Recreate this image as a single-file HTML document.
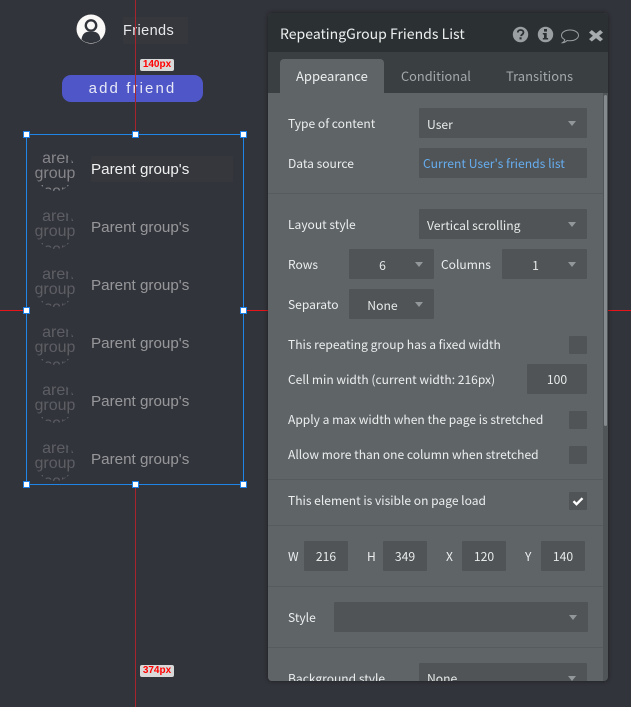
<!DOCTYPE html>
<html>
<head>
<meta charset="utf-8">
<style>
html,body{margin:0;padding:0;width:631px;height:707px;overflow:hidden;background:#32343b}
*{box-sizing:border-box}
.a{position:absolute}
body{font-family:"DejaVu Sans",sans-serif}
.t{position:absolute;white-space:nowrap;font-family:"Noto Sans CJK JP","Liberation Sans",sans-serif;font-size:12.05px;color:#eceeee;line-height:18px;margin-top:1px}
.f{position:absolute;background:#505456;border-radius:1px}
.v{position:absolute;white-space:nowrap;font-family:"Noto Sans CJK JP","Liberation Sans",sans-serif;font-size:12.15px;color:#e8eaea;line-height:30px;top:0;margin-top:1px}
.c{position:absolute;left:0;right:0;text-align:center;font-family:"Noto Sans CJK JP","Liberation Sans",sans-serif;font-size:12.2px;color:#e8eaea;line-height:30px;top:0}
.s{top:1px}
.ar{position:absolute;width:0;height:0;border-left:4.5px solid transparent;border-right:4.5px solid transparent;border-top:5px solid #92979a;top:13px}
.cb{position:absolute;left:569px;width:18px;height:18px;background:#505456;border-radius:1px}
.d{position:absolute;left:268px;width:335px;height:1px;background:#565b5e}
.h{position:absolute;width:7px;height:7px;background:#fff;border:1px solid #1a7fe8}
.rt{position:absolute;left:91px;font-family:"Liberation Sans",sans-serif;font-size:15.2px;line-height:26px;color:#f0f0f0;white-space:nowrap}
.av{position:absolute;left:35px;width:40px;height:40px;border-radius:50%;overflow:hidden;font-family:"Liberation Sans",sans-serif;font-size:16px;line-height:17px;text-align:center;color:#85858a}
.av div{white-space:nowrap;position:absolute;left:-10px;width:60px}
.dim{opacity:.52}
.lb{position:absolute;left:140px;width:34px;height:12px;background:#d9d9d9;border-radius:2px;color:#f00;font:bold 10px/12px "Liberation Sans",sans-serif;text-align:center}
</style>
</head>
<body>

<!-- guides -->
<div class="a" style="left:135px;top:0;width:1px;height:134px;background:#a8242c"></div>
<div class="a" style="left:135px;top:485px;width:1px;height:222px;background:#a8242c"></div>
<div class="a" style="left:0;top:310px;width:27px;height:1px;background:#e8141c"></div>
<div class="a" style="left:244px;top:310px;width:24px;height:1px;background:#e8141c"></div>
<div class="a" style="left:608px;top:310px;width:23px;height:1px;background:#e8141c"></div>

<!-- header area -->
<svg class="a" style="left:76px;top:14px" width="30" height="30" viewBox="0 0 30 30">
<circle cx="15" cy="15" r="14.5" fill="#fbf9f8"/>
<circle cx="15" cy="11.5" r="5.2" fill="none" stroke="#32343b" stroke-width="2.4"/>
<path d="M5.500 25.500c.5-5.500 4-7.800 6.500-7.800h6c2.500 0 6 2.300 6.500 7.800c-2.500 2.300-5.500 3.500-9.500 3.500s-7-1.200-9.500-3.500z" fill="#32343b"/>
</svg>
<div class="a" style="left:123px;top:17px;width:65px;height:27px;background:#36373d"></div>
<div class="a" style="left:123px;top:18px;font:14.5px/27px 'Liberation Sans',sans-serif;color:#e6e8ea;letter-spacing:.4px">Friends</div>
<div class="lb" style="top:59px">140px</div>
<div class="a" style="left:62px;top:75px;width:141px;height:27px;background:#4f57c8;border-radius:9px;text-align:center;font:15px/27px 'Liberation Sans',sans-serif;letter-spacing:2.1px;color:#e8e9f6">add friend</div>
<div class="a" style="left:135px;top:0;width:1px;height:102px;background:#a8242c"></div>

<!-- repeating group rows -->
<div class="a" style="left:91px;top:156px;width:142px;height:26px;background:#36373d"></div>

<div class="av" style="top:151px"><div style="top:-1px">Parent</div><div style="top:14px">group</div><div style="top:32px">User's</div></div>
<div class="rt" style="top:157px">Parent group's</div>

<div class="dim">
<div class="av" style="top:209px"><div style="top:-1px">Parent</div><div style="top:14px">group</div><div style="top:32px">User's</div></div>
<div class="rt" style="top:215px">Parent group's</div>
<div class="av" style="top:267px"><div style="top:-1px">Parent</div><div style="top:14px">group</div><div style="top:32px">User's</div></div>
<div class="rt" style="top:273px">Parent group's</div>
<div class="av" style="top:325px"><div style="top:-1px">Parent</div><div style="top:14px">group</div><div style="top:32px">User's</div></div>
<div class="rt" style="top:331px">Parent group's</div>
<div class="av" style="top:383px"><div style="top:-1px">Parent</div><div style="top:14px">group</div><div style="top:32px">User's</div></div>
<div class="rt" style="top:389px">Parent group's</div>
<div class="av" style="top:441px"><div style="top:-1px">Parent</div><div style="top:14px">group</div><div style="top:32px">User's</div></div>
<div class="rt" style="top:447px">Parent group's</div>
</div>

<!-- selection box -->
<div class="a" style="left:26px;top:134px;width:218px;height:351px;border:1px solid #1f85e6"></div>
<div class="h" style="left:23px;top:131px"></div>
<div class="h" style="left:132px;top:131px"></div>
<div class="h" style="left:240px;top:131px"></div>
<div class="h" style="left:23px;top:307px"></div>
<div class="h" style="left:240px;top:307px"></div>
<div class="h" style="left:23px;top:481px"></div>
<div class="h" style="left:132px;top:481px"></div>
<div class="h" style="left:240px;top:481px"></div>
<div class="lb" style="top:665px">374px</div>

<!-- panel -->
<div class="a" style="left:268px;top:13px;width:340px;height:668px;background:#505558;border-radius:4px;box-shadow:0 0 5px rgba(0,0,0,.45);overflow:hidden">
  <div class="a" style="left:0;top:0;width:340px;height:39px;background:#2b3133"></div>
  <div class="a" style="left:0;top:39px;width:340px;height:41px;background:#3a3f41"></div>
  <div class="a" style="left:0;top:80px;width:335px;height:590px;background:#5f6467"></div>
  <div class="a" style="left:12px;top:46px;width:104px;height:34px;background:#5f6467;border-radius:4px 4px 0 0"></div>
  <div class="a" style="left:336px;top:82px;width:3px;height:331px;background:#858a8e;border-radius:2px"></div>
</div>

<div class="t" style="left:280px;top:24px;margin-top:0;font-size:14.05px;line-height:20px;color:#eef0f0">RepeatingGroup Friends List</div>
<div class="t" style="left:296px;top:67px;margin-top:0;color:#eceeee;font-size:13px">Appearance</div>
<div class="t" style="left:401px;top:67px;margin-top:0;color:#a4a9ab;font-size:12.8px">Conditional</div>
<div class="t" style="left:506px;top:67px;margin-top:0;color:#a4a9ab;font-size:13px">Transitions</div>

<!-- header icons -->
<svg class="a" style="left:512px;top:25px" width="100" height="20" viewBox="0 0 100 20">
<circle cx="8.500" cy="9.500" r="7.700" fill="#9aa0a2"/>
<path d="M5.700 7.500c.2-1.700 1.400-2.500 2.900-2.500 1.700 0 2.900 1 2.900 2.400 0 2.100-2.400 2-2.400 3.700" fill="none" stroke="#2b3133" stroke-width="1.800"/>
<rect x="7.500" y="12.300" width="2.100" height="2.100" fill="#2b3133"/>
<circle cx="33.500" cy="9.500" r="7.700" fill="#9aa0a2"/>
<rect x="32" y="4" width="3" height="2.600" fill="#2b3133"/>
<path d="M30.800 8h3.900v5h1.400v1.500h-5.300V13h1.200V9.500h-1.200z" fill="#2b3133"/>
<path d="M50.500 17.700c1.300-.8 2.200-1.800 2.300-3-2-1-3.300-2.500-3.300-4.300 0-3 3.700-5.400 8.500-5.400s8.500 2.400 8.500 5.400-3.700 5.400-8.500 5.400c-1.100 0-2-.1-2.900-.3-1.200 1.200-2.900 2.200-4.600 2.200z" fill="none" stroke="#9aa0a2" stroke-width="1"/>
<path d="M77 7.500l2.800-2.500 4.200 3.500 4.200-3.500 2.800 2.500-3.900 3.300 3.900 3.300-2.800 2.400-4.200-3.400-4.200 3.400-2.800-2.400 3.900-3.300z" fill="#a6abad"/>
</svg>

<!-- section 1 -->
<div class="t" style="left:288px;top:114px">Type of content</div>
<div class="f" style="left:419px;top:108px;width:168px;height:30px"><div class="v s" style="left:8px">User</div><div class="ar" style="left:149px"></div></div>
<div class="t" style="left:288px;top:154px">Data source</div>
<div class="f" style="left:419px;top:148px;width:168px;height:30px"><div class="v" style="left:4px;color:#66adf0">Current User's friends list</div></div>
<div class="d" style="top:193px"></div>

<!-- section 2 -->
<div class="t" style="left:288px;top:215px">Layout style</div>
<div class="f" style="left:419px;top:209px;width:168px;height:30px"><div class="v s" style="left:8px">Vertical scrolling</div><div class="ar" style="left:149px"></div></div>

<div class="t" style="left:288px;top:255px">Rows</div>
<div class="f" style="left:349px;top:249px;width:85px;height:30px"><div class="c s" style="right:18px">6</div><div class="ar" style="left:66px"></div></div>
<div class="t" style="left:441px;top:255px">Columns</div>
<div class="f" style="left:502px;top:249px;width:85px;height:30px"><div class="c s" style="right:18px">1</div><div class="ar" style="left:66px"></div></div>

<div class="t" style="left:288px;top:295px">Separato</div>
<div class="f" style="left:349px;top:289px;width:85px;height:30px"><div class="c s" style="right:18px">None</div><div class="ar" style="left:66px"></div></div>

<div class="t" style="left:288px;top:335px">This repeating group has a fixed width</div>
<div class="cb" style="top:336px"></div>
<div class="t" style="left:288px;top:370px">Cell min width (current width: 216px)</div>
<div class="f" style="left:527px;top:364px;width:60px;height:30px"><div class="c">100</div></div>
<div class="t" style="left:288px;top:410px">Apply a max width when the page is stretched</div>
<div class="cb" style="top:411px"></div>
<div class="t" style="left:288px;top:445px">Allow more than one column when stretched</div>
<div class="cb" style="top:446px"></div>
<div class="d" style="top:479px"></div>

<div class="t" style="left:288px;top:491px">This element is visible on page load</div>
<div class="cb" style="top:492px"><svg width="18" height="18" viewBox="0 0 18 18"><path d="M4.500 9.200l3 3 6-6" fill="none" stroke="#fff" stroke-width="2.400"/></svg></div>
<div class="d" style="top:525px"></div>

<!-- geometry -->
<div class="t" style="left:288px;top:547px">W</div>
<div class="f" style="left:304px;top:541px;width:44px;height:30px"><div class="c">216</div></div>
<div class="t" style="left:367px;top:547px">H</div>
<div class="f" style="left:383px;top:541px;width:44px;height:30px"><div class="c">349</div></div>
<div class="t" style="left:446px;top:547px">X</div>
<div class="f" style="left:462px;top:541px;width:44px;height:30px"><div class="c">120</div></div>
<div class="t" style="left:525px;top:547px">Y</div>
<div class="f" style="left:541px;top:541px;width:44px;height:30px"><div class="c">140</div></div>
<div class="d" style="top:586px"></div>

<div class="t" style="left:288px;top:608px">Style</div>
<div class="f" style="left:334px;top:602px;width:254px;height:30px"><div class="ar" style="left:235px"></div></div>
<div class="d" style="top:647px"></div>

<!-- clipped bottom -->
<div class="a" style="left:268px;top:650px;width:335px;height:31px;overflow:hidden">
  <div class="t" style="left:20px;top:19px">Background style</div>
  <div class="f" style="left:151px;top:13px;width:168px;height:30px"><div class="v" style="left:8px;top:1px;margin-top:0">None</div><div class="ar" style="left:149px"></div></div>
</div>

</body>
</html>
